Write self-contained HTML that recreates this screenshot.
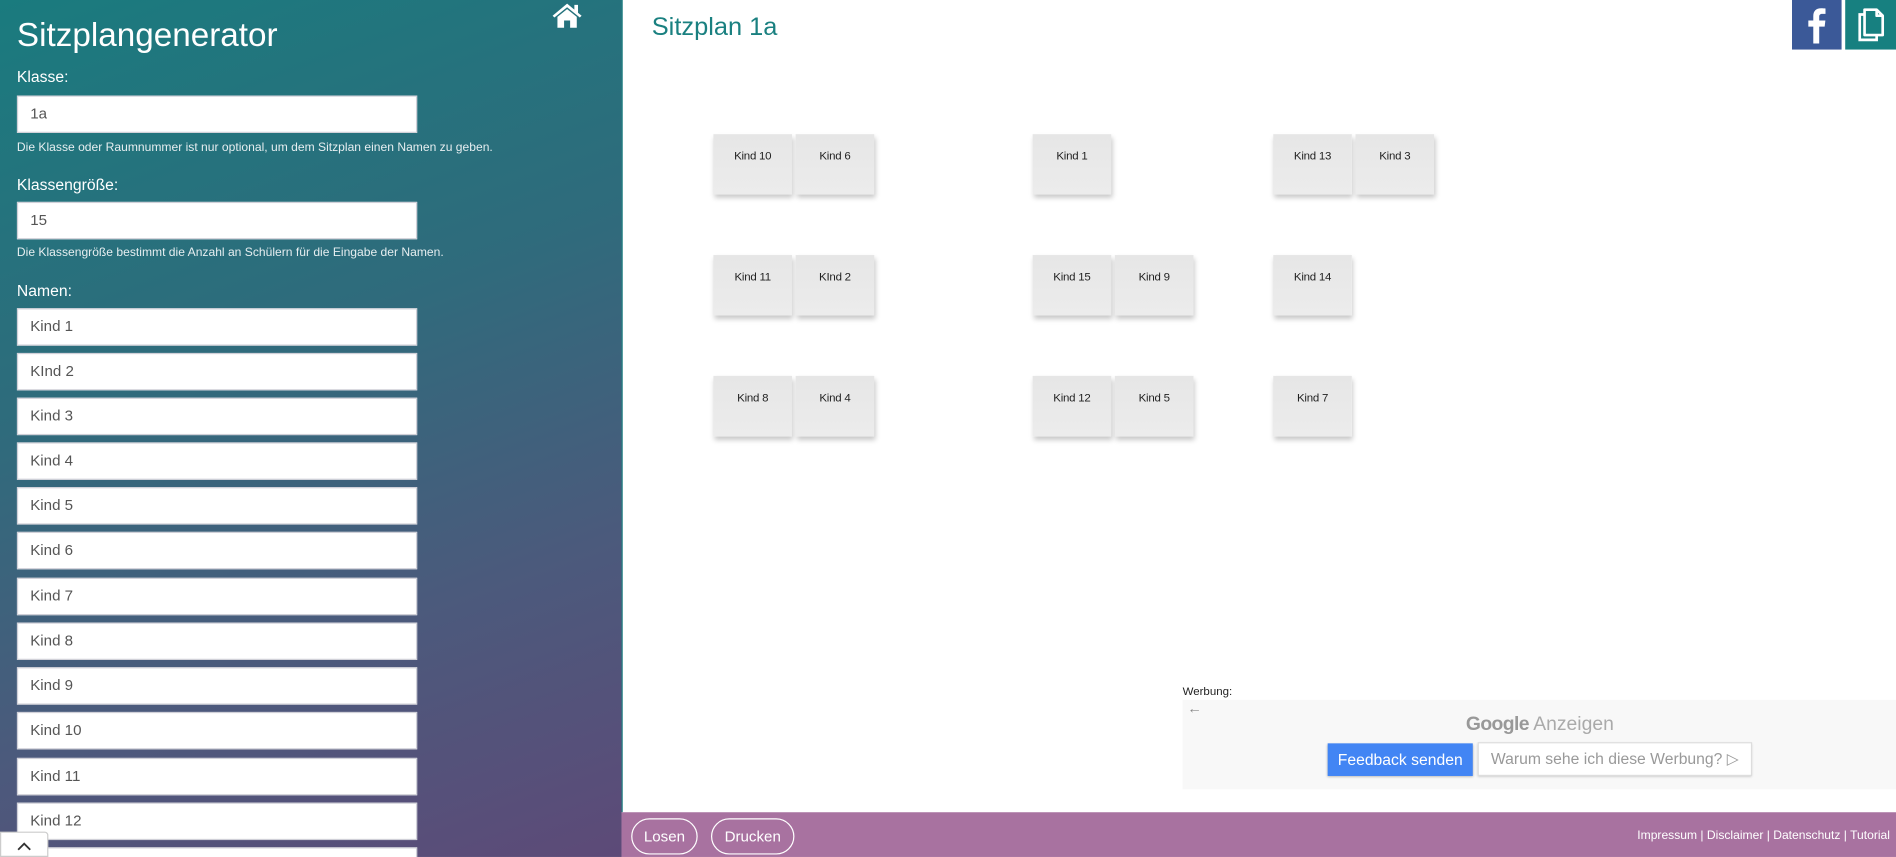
<!DOCTYPE html>
<html><head><meta charset="utf-8"><style>
html,body{margin:0;padding:0;width:1896px;height:857px;overflow:hidden;background:#fff}
#w{position:absolute;left:0;top:0;width:1568px;height:709px;transform:scale(1.20918,1.2087);transform-origin:0 0;font-family:"Liberation Sans",sans-serif;overflow:hidden}
#side{position:absolute;left:0;top:0;width:514px;height:709px;background:linear-gradient(160deg,#1a7b7e 0%,#2f6b7c 40%,#4b5a7c 70%,#5d4a78 100%);color:#fff}
.t{position:absolute;left:14px;white-space:nowrap}
.inp{position:absolute;left:14px;background:#fff;border:1px solid #d0d0d8;color:#555;font-size:12.5px;line-height:29px;padding-left:10px;box-sizing:border-box;width:331px;height:31px}
#main{position:absolute;left:514px;top:0;width:1054px;height:672px;background:#fff;border-left:1px solid #1a7b7e;box-sizing:border-box}
.d{position:absolute;width:65px;height:50px;background:linear-gradient(#e6e6e6,#ececec);box-shadow:1px 3px 4px rgba(0,0,0,.22);font-size:9.5px;color:#222;text-align:center;line-height:38px;letter-spacing:-.2px}
#foot{position:absolute;left:514px;top:672px;width:1054px;height:37px;background:#a872a0}
.btn{position:absolute;top:5px;border:1px solid #fff;border-radius:15px;color:#fff;font-size:12.5px;line-height:28px;text-align:center;box-sizing:border-box;height:30px}
</style></head><body><div id="w">
<div id="side">
<svg style="position:absolute;left:456px;top:2px" width="26" height="22" viewBox="0 0 26 22"><path d="M1 11 L13 1 L19 6 V2 H22 V8.5 L25 11 L23.5 12.5 L13 4 L2.5 12.5Z" fill="#fff"/><path d="M5 12 L13 5.5 L21 12 V21 H15.5 V15 H10.5 V21 H5Z" fill="#fff"/></svg>
<div class="t" style="top:13px;font-size:27.5px">Sitzplangenerator</div>
<div class="t" style="top:56px;font-size:13px">Klasse:</div>
<div class="inp" style="top:79px">1a</div>
<div class="t" style="top:117px;font-size:10px;color:#e6eef0">Die Klasse oder Raumnummer ist nur optional, um dem Sitzplan einen Namen zu geben.</div>
<div class="t" style="top:145px;font-size:13px">Klassengröße:</div>
<div class="inp" style="top:167px">15</div>
<div class="t" style="top:204px;font-size:10px;color:#e6eef0">Die Klassengröße bestimmt die Anzahl an Schülern für die Eingabe der Namen.</div>
<div class="t" style="top:233px;font-size:13px">Namen:</div>
<div class="inp" style="top:255px">Kind 1</div>
<div class="inp" style="top:292px">KInd 2</div>
<div class="inp" style="top:329px">Kind 3</div>
<div class="inp" style="top:366px">Kind 4</div>
<div class="inp" style="top:403px">Kind 5</div>
<div class="inp" style="top:440px">Kind 6</div>
<div class="inp" style="top:478px">Kind 7</div>
<div class="inp" style="top:515px">Kind 8</div>
<div class="inp" style="top:552px">Kind 9</div>
<div class="inp" style="top:589px">Kind 10</div>
<div class="inp" style="top:627px">Kind 11</div>
<div class="inp" style="top:664px">Kind 12</div>
<div class="inp" style="top:701px"></div>
<div style="position:absolute;left:0;top:688px;width:40px;height:21px;background:#fff;border:1px solid #ccc;box-sizing:border-box;border-radius:0 3px 0 0;text-align:center"><svg width="12" height="8" style="margin-top:7px"><path d="M1 7 L6 2 L11 7" stroke="#333" stroke-width="1.5" fill="none"/></svg></div>
</div>
<div id="main">
<div style="position:absolute;left:24px;top:11px;font-size:21px;color:#1a8080">Sitzplan 1a</div>
<div style="position:absolute;left:967px;top:0;width:41px;height:41px;background:#3b5998"><svg width="41" height="41" viewBox="0 0 41 41"><path d="M22.5 36 V22 H27 L27.6 17 H22.5 V14 C22.5 12.5 23 11.5 25 11.5 H27.7 V7 C27 6.9 25.5 6.8 24 6.8 C20 6.8 17.6 9 17.6 13.3 V17 H13.5 V22 H17.6 V36Z" fill="#fff"/></svg></div>
<div style="position:absolute;left:1011px;top:0;width:43px;height:41px;background:#178080"><svg width="43" height="41" viewBox="0 0 43 41"><path d="M16 12 H12 V33 H26 V29" stroke="#fff" stroke-width="2.2" fill="none"/><path d="M16 8 H26 L31 13 V29 H16Z M26 8 V13 H31" stroke="#fff" stroke-width="2.2" fill="none" stroke-linejoin="round"/></svg></div>
<div class="d" style="left:75px;top:111px">Kind 10</div>
<div class="d" style="left:143px;top:111px">Kind 6</div>
<div class="d" style="left:339px;top:111px">Kind 1</div>
<div class="d" style="left:538px;top:111px">Kind 13</div>
<div class="d" style="left:606px;top:111px">Kind 3</div>
<div class="d" style="left:75px;top:211px">Kind 11</div>
<div class="d" style="left:143px;top:211px">KInd 2</div>
<div class="d" style="left:339px;top:211px">Kind 15</div>
<div class="d" style="left:407px;top:211px">Kind 9</div>
<div class="d" style="left:538px;top:211px">Kind 14</div>
<div class="d" style="left:75px;top:311px">Kind 8</div>
<div class="d" style="left:143px;top:311px">Kind 4</div>
<div class="d" style="left:339px;top:311px">Kind 12</div>
<div class="d" style="left:407px;top:311px">Kind 5</div>
<div class="d" style="left:538px;top:311px">Kind 7</div>
<div style="position:absolute;left:463px;top:567px;font-size:9.5px;color:#222">Werbung:</div>
<div style="position:absolute;left:463px;top:579px;width:591px;height:74px;background:#f8f8f8">
<div style="position:absolute;left:4px;top:0;font-size:12px;color:#888">←</div>
<div style="position:absolute;left:0;width:591px;top:12px;text-align:center;font-size:16px;color:#aaa"><b style="color:#999;font-weight:bold;letter-spacing:-.5px">Google</b> Anzeigen</div>
<div style="position:absolute;left:120px;top:36px;width:120px;height:27px;background:#4285f4;color:#fff;font-size:13px;line-height:27px;text-align:center;box-shadow:0 1px 2px rgba(0,0,0,.3)">Feedback senden</div>
<div style="position:absolute;left:244px;top:35px;width:227px;height:28px;background:#fff;border:1px solid #ddd;box-sizing:border-box;color:#999;font-size:13px;line-height:26px;text-align:center;box-shadow:0 1px 2px rgba(0,0,0,.2)">Warum sehe ich diese Werbung? ▷</div>
</div>
</div>
<div id="foot">
<div class="btn" style="left:8px;width:55px">Losen</div>
<div class="btn" style="left:74px;width:69px">Drucken</div>
<div style="position:absolute;right:5px;top:14px;font-size:10px;color:#fff;white-space:nowrap">Impressum | Disclaimer | Datenschutz | Tutorial</div>
</div>
</div></body></html>
